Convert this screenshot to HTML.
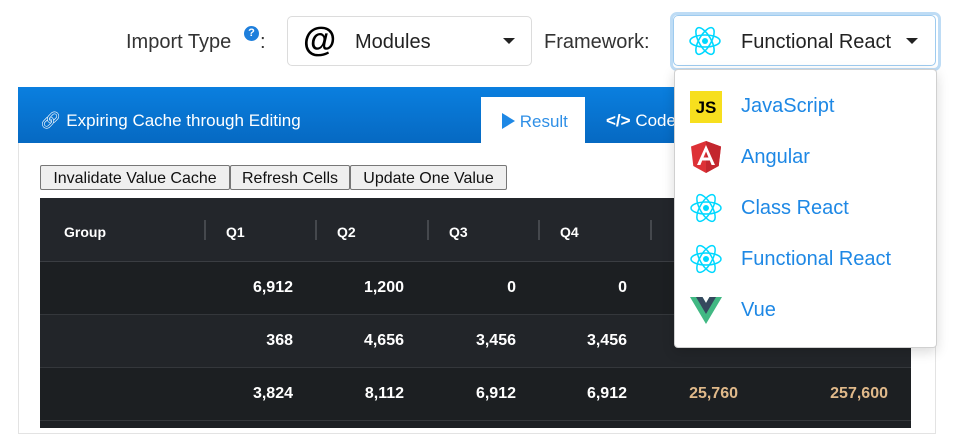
<!DOCTYPE html>
<html><head><style>
body{margin:0;width:973px;height:423px;overflow:hidden;background:#fff;font-family:"Segoe UI","Liberation Sans",sans-serif;position:relative}
.a{position:absolute}
.lbl{font-size:20px;color:#333}
.sel{border:1px solid #dcdcdc;border-radius:5px;background:#fff}
.car{width:0;height:0;border-left:6px solid transparent;border-right:6px solid transparent;border-top:6px solid #222}
.btn{position:absolute;top:165px;height:25px;border:1px solid #777;background:#efefef;font-size:16px;line-height:25px;box-sizing:border-box;text-align:center;color:#111;border-radius:2px}
.grid{position:absolute;left:40px;top:198px;width:871px;height:230px;background:#1d2024;font-family:"Liberation Sans",sans-serif;font-weight:bold;color:#fff;font-size:16px}
.hd{position:absolute;top:0;left:0;right:0;height:63px;background:#23262b;border-bottom:1px solid #3a3d42}
.row{position:absolute;left:0;right:0;height:52px;border-bottom:1px solid #34373b}
.c{position:absolute;text-align:right;width:90px}
.h{position:absolute;top:26px;font-size:14px}
.sep{position:absolute;top:22px;width:2px;height:20px;background:#45484d}
.dd{left:674px;top:69px;width:261px;height:277px;background:#fff;border:1px solid #d0d0d0;border-radius:4px;box-shadow:0 4px 12px rgba(0,0,0,.15)}
.it{position:absolute;left:66px;font-size:20px;color:#1e88e5}
.ic{position:absolute;left:15px;width:32px;height:32px}
</style></head><body>
<div class="a lbl" style="left:126px;top:31px">Import Type</div>
<div class="a" style="left:244px;top:26px;width:15px;height:15px;border-radius:50%;background:#1e7fdc;color:#fff;font-size:11px;font-weight:bold;text-align:center;line-height:15px">?</div>
<div class="a lbl" style="left:260px;top:31px">:</div>
<div class="a sel" style="left:287px;top:16px;width:243px;height:48px"></div>
<div class="a" style="left:303px;top:21px;font-size:34px;font-weight:bold;color:#000;font-family:'Liberation Sans',sans-serif">@</div>
<div class="a lbl" style="left:355px;top:31px;color:#222">Modules</div>
<div class="a car" style="left:503px;top:38px"></div>
<div class="a lbl" style="left:544px;top:31px">Framework:</div>
<div class="a" style="left:670px;top:12px;width:265px;height:53px;border:3px solid #bedcf5;border-radius:7px"></div>
<div class="a sel" style="left:673px;top:15px;width:261px;height:49px;border-color:#9ecbef"></div>
<svg class="a" style="left:688px;top:24px" width="34" height="34" viewBox="-17 -17 34 34"><g fill="none" stroke="#00d8ff" stroke-width="1.6"><ellipse rx="15" ry="6"/><ellipse rx="15" ry="6" transform="rotate(60)"/><ellipse rx="15" ry="6" transform="rotate(120)"/></g><circle r="3" fill="#00d8ff"/></svg>
<div class="a lbl" style="left:741px;top:31px;color:#222">Functional React</div>
<div class="a car" style="left:906px;top:38px"></div>

<div class="a" style="left:18px;top:87px;width:917px;height:56px;background:linear-gradient(#0a7fdf,#0669c2)"></div>
<div class="a" style="left:40px;top:111px;color:#fff;font-size:17px">&#128279;&#xFE0E; Expiring Cache through Editing</div>
<div class="a" style="left:481px;top:97px;width:104px;height:46px;background:#fff"></div>
<div class="a" style="left:502px;top:112px;font-size:17px;color:#2f8fe6"><span style="display:inline-block;width:0;height:0;border-top:8px solid transparent;border-bottom:8px solid transparent;border-left:13px solid #1e88e5;vertical-align:-2px"></span> Result</div>
<div class="a" style="left:606px;top:111px;font-size:17px;color:#fff"><b>&lt;/&gt;</b> Code</div>
<div class="a" style="left:18px;top:143px;width:916px;height:290px;border:1px solid #e3e3e3;border-top:none"></div>

<div class="btn" style="left:40px;width:190px">Invalidate Value Cache</div>
<div class="btn" style="left:230px;width:120px">Refresh Cells</div>
<div class="btn" style="left:350px;width:157px">Update One Value</div>

<div class="grid">
<div class="hd">
<div class="h" style="left:24px">Group</div>
<div class="sep" style="left:164px"></div><div class="h" style="left:186px">Q1</div>
<div class="sep" style="left:275px"></div><div class="h" style="left:297px">Q2</div>
<div class="sep" style="left:387px"></div><div class="h" style="left:409px">Q3</div>
<div class="sep" style="left:498px"></div><div class="h" style="left:520px">Q4</div>
<div class="sep" style="left:610px"></div>
</div>
<div class="row" style="top:64px;background:#1c1f22"><div class="c" style="left:163px;top:17px">6,912</div><div class="c" style="left:274px;top:17px">1,200</div><div class="c" style="left:386px;top:17px">0</div><div class="c" style="left:497px;top:17px">0</div></div>
<div class="row" style="top:117px;background:#222529"><div class="c" style="left:163px;top:17px">368</div><div class="c" style="left:274px;top:17px">4,656</div><div class="c" style="left:386px;top:17px">3,456</div><div class="c" style="left:497px;top:17px">3,456</div></div>
<div class="row" style="top:170px;background:#1c1f22"><div class="c" style="left:163px;top:17px">3,824</div><div class="c" style="left:274px;top:17px">8,112</div><div class="c" style="left:386px;top:17px">6,912</div><div class="c" style="left:497px;top:17px">6,912</div><div class="c" style="left:608px;top:17px;color:#e0b98a">25,760</div><div class="c" style="left:758px;top:17px;color:#e0b98a">257,600</div></div>
</div>

<div class="a dd">
<div class="ic" style="top:21px;background:#f7df1e;font:bold 17px 'Liberation Sans',sans-serif;color:#000;text-align:center;line-height:34px">JS</div>
<div class="it" style="top:25px">JavaScript</div>
<svg class="ic" style="top:71px" viewBox="0 0 32 32"><path d="M16 0L1 5.5 3.3 25 16 32 28.7 25 31 5.5Z" fill="#dd3136"/><path d="M16 0V32L28.7 25 31 5.5Z" fill="#c3262e"/><path d="M16 4L7 24h3.4l1.8-4.5h7.6l1.8 4.5H25ZM13.5 16.5L16 10.5l2.5 6Z" fill="#fff"/></svg>
<div class="it" style="top:76px">Angular</div>
<svg class="ic" style="top:122px" viewBox="-16 -16 32 32"><g fill="none" stroke="#00d8ff" stroke-width="1.5"><ellipse rx="15" ry="6"/><ellipse rx="15" ry="6" transform="rotate(60)"/><ellipse rx="15" ry="6" transform="rotate(120)"/></g><circle r="3" fill="#00d8ff"/></svg>
<div class="it" style="top:127px">Class React</div>
<svg class="ic" style="top:173px" viewBox="-16 -16 32 32"><g fill="none" stroke="#00d8ff" stroke-width="1.5"><ellipse rx="15" ry="6"/><ellipse rx="15" ry="6" transform="rotate(60)"/><ellipse rx="15" ry="6" transform="rotate(120)"/></g><circle r="3" fill="#00d8ff"/></svg>
<div class="it" style="top:178px">Functional React</div>
<svg class="ic" style="top:224px" viewBox="0 0 32 32"><path d="M0 3H12.5L16 9 19.5 3H32L16 30Z" fill="#41b883"/><path d="M6 3H12.5L16 9 19.5 3H26L16 20Z" fill="#35495e"/></svg>
<div class="it" style="top:229px">Vue</div>
</div>
</body></html>
